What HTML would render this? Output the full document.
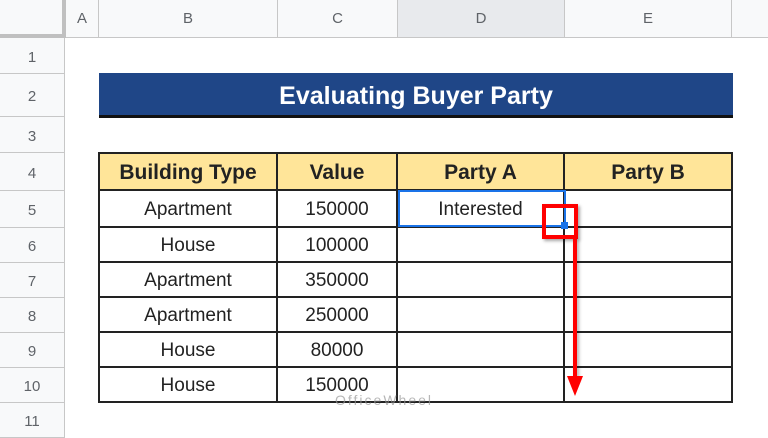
<!DOCTYPE html>
<html><head><style>
body{margin:0;width:768px;height:438px;overflow:hidden;background:#fff;font-family:"Liberation Sans",Arial,sans-serif;position:relative}
.a{position:absolute}
.ch{top:0;height:38px;background:#f8f9fa;border-right:1px solid #c7c7c7;border-bottom:1px solid #c7c7c7;box-sizing:border-box;color:#5f6368;font-size:15px;text-align:center;line-height:38px}
.rh{left:0;width:65px;background:#f8f9fa;border-bottom:1px solid #c7c7c7;border-right:1px solid #c7c7c7;box-sizing:border-box;color:#5f6368;font-size:15px;text-align:center;padding-top:3px}
.c{border-right:2px solid #222;border-bottom:2px solid #222;box-sizing:border-box;text-align:center;font-size:19px;color:#222;padding-top:3px}
</style></head><body>
<div class="a ch" style="left:0;width:66px;border-right:4px solid #c0c0c0;border-bottom:4px solid #c0c0c0"></div>
<div class="a ch" style="left:66px;width:33px">A</div>
<div class="a ch" style="left:99px;width:179px">B</div>
<div class="a ch" style="left:278px;width:120px">C</div>
<div class="a ch" style="left:398px;width:167px;background:#e8eaed">D</div>
<div class="a ch" style="left:565px;width:167px">E</div>
<div class="a ch" style="left:732px;width:40px"></div>
<div id="rows"></div>
<div class="a" style="left:99px;top:73px;width:634px;height:45px;background:#1f4687;border-bottom:3px solid #111;box-sizing:border-box;color:#fff;font-weight:bold;font-size:25px;text-align:center;line-height:46px">Evaluating Buyer Party</div>
<div class="a" style="left:98px;top:152px;width:635px;height:251px;border-left:2px solid #222;border-top:2px solid #222;box-sizing:border-box"></div>
<div id="tb"></div>
<div class="a" style="left:398px;top:190px;width:168px;height:37px;border:2px solid #1a73e8;box-sizing:border-box"></div>
<div class="a" style="left:561px;top:222px;width:7px;height:7px;background:#1a73e8"></div>
<div class="a" style="left:542px;top:204px;width:36px;height:35px;border:4px solid #f00;box-sizing:border-box;box-shadow:2px 2px 3px rgba(0,0,0,.35)"></div>
<div class="a" style="left:573px;top:238px;width:4px;height:142px;background:#f00;box-shadow:2px 2px 3px rgba(0,0,0,.3)"></div>
<div class="a" style="left:567px;top:376px;width:0;height:0;border-left:8px solid transparent;border-right:8px solid transparent;border-top:20px solid #f00"></div>
<div class="a" style="left:335px;top:392px;color:#999;font-size:14px;letter-spacing:2px;opacity:.7">OfficeWheel</div>
<script>
var rt=[38,74,117,153,191,228,263,298,333,368,403,438];
var h='';for(var i=0;i<11;i++)h+='<div class="a rh" style="top:'+rt[i]+'px;height:'+(rt[i+1]-rt[i])+'px;line-height:'+(rt[i+1]-rt[i]-3)+'px">'+(i+1)+'</div>';
document.getElementById('rows').outerHTML=h;
var data=[["Building Type","Value","Party A","Party B"],["Apartment","150000","Interested",""],["House","100000","",""],["Apartment","350000","",""],["Apartment","250000","",""],["House","80000","",""],["House","150000","",""]];
var cx=[100,278,398,565,733];var t='';
for(var r=0;r<7;r++)for(var c=0;c<4;c++){var y=rt[r+3]+(r==0?1:0),hh=rt[r+4]-y;
t+='<div class="a c" style="left:'+cx[c]+'px;top:'+y+'px;width:'+(cx[c+1]-cx[c])+'px;height:'+hh+'px;line-height:'+(hh-5)+'px;'+(r==0?'background:#ffe599;font-weight:bold;font-size:21px;':'')+'">'+data[r][c]+'</div>';}
document.getElementById('tb').outerHTML=t;
</script>
</body></html>
